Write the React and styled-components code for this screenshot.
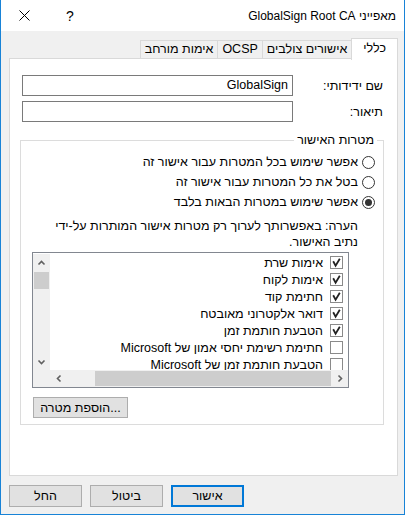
import React from "react";
import styled, { createGlobalStyle } from "styled-components";

const GlobalStyle = createGlobalStyle`
  html, body {
    margin: 0;
    padding: 0;
    background: #ffffff;
  }
  body {
    font-family: "Liberation Sans", Arial, sans-serif;
    font-size: 12.5px;
    color: #000;
  }
`;

// Dialog frame
const Window = styled.div`
  width: 405px;
  height: 515px;
  box-sizing: border-box;
  border: 1px solid #1883d7;
  border-top: none;
  display: flex;
  flex-direction: column;
  background: #f0f0f0;
  direction: rtl;
`;

const TitleBar = styled.div`
  height: 31px;
  flex-shrink: 0;
  display: flex;
  align-items: center;
  background: #ffffff;
`;

const Title = styled.div`
  flex: 1;
  padding-right: 8px;
  font-size: 12px;
  white-space: nowrap;
`;

const CaptionButton = styled.div`
  width: 46px;
  height: 31px;
  display: flex;
  align-items: center;
  justify-content: center;
  font-size: 14px;
`;

const Body = styled.div`
  flex: 1;
  display: flex;
  flex-direction: column;
  padding: 7px 6px 0 8px;
`;

// Tabs
const TabStrip = styled.div`
  height: 20px;
  display: flex;
  align-items: flex-end;
  position: relative;
  z-index: 1;
`;

const Tab = styled.div`
  box-sizing: border-box;
  height: ${({ $active }) => ($active ? "22px" : "18px")};
  margin-bottom: ${({ $active }) => ($active ? "-2px" : "0")};
  margin-left: -1px;
  padding: ${({ $active }) => ($active ? "2px 11px 0" : "1px 4px 0")};
  border: 1px solid #d9d9d9;
  border-bottom: none;
  background: ${({ $active }) => ($active ? "#ffffff" : "#f0f0f0")};
  white-space: nowrap;
  line-height: 15px;
`;

const Panel = styled.div`
  box-sizing: border-box;
  height: 418px;
  background: #ffffff;
  border: 1px solid #d9d9d9;
  padding: 16px 13px 0 10px;
  display: flex;
  flex-direction: column;
`;

const FieldRow = styled.div`
  display: flex;
  align-items: center;
  justify-content: space-between;
  padding-left: 2px;
  padding-right: 1px;
  margin-bottom: ${({ $gap }) => $gap}px;
`;

const FieldLabel = styled.label`
  white-space: nowrap;
`;

const TextBox = styled.div`
  box-sizing: border-box;
  width: 271px;
  height: 21px;
  border: 1px solid #7a7a7a;
  padding: 0 4px;
  display: flex;
  align-items: center;
  line-height: 19px;
`;

// Group box
const GroupBox = styled.fieldset`
  margin: 11px 0 0 0;
  padding: 0 0 6px 0;
  border: 1px solid #dcdcdc;
  display: flex;
  flex-direction: column;
  min-width: 0;
`;

const Legend = styled.legend`
  margin-right: 6px;
  padding: 0 3px;
  line-height: 15px;
`;

const RadioRow = styled.div`
  height: 20px;
  display: flex;
  align-items: center;
  gap: 4px;
  padding-right: 8px;
`;

const RadioCircle = styled.span`
  box-sizing: border-box;
  width: 13px;
  height: 13px;
  border-radius: 50%;
  border: 1px solid #333333;
  background: #ffffff;
  display: flex;
  align-items: center;
  justify-content: center;

  &::after {
    content: "";
    width: 7px;
    height: 7px;
    border-radius: 50%;
    background: ${({ $checked }) => ($checked ? "#333333" : "transparent")};
  }
`;

const Note = styled.div`
  margin-top: 6px;
  padding-right: 25px;
  line-height: 16px;
`;

// List box with scrollbars
const ListBox = styled.div`
  box-sizing: border-box;
  height: 136px;
  margin: 2px 34px 0 11px;
  border: 1px solid #828790;
  padding: 1px 0 0 1px;
  display: grid;
  grid-template-columns: 1fr 17px;
  grid-template-rows: 1fr 17px;
`;

const Items = styled.div`
  overflow: hidden;
  padding-right: 5px;
`;

const Item = styled.div`
  height: 17px;
  display: flex;
  align-items: center;
  gap: 7px;
  white-space: nowrap;
`;

const CheckBox = styled.span`
  box-sizing: border-box;
  width: 13px;
  height: 13px;
  flex-shrink: 0;
  border: 1px solid #8a8a8a;
  background: #ffffff;
  display: flex;
  align-items: center;
  justify-content: center;
`;

const VScroll = styled.div`
  background: #f0f0f0;
  display: flex;
  flex-direction: column;
  align-items: center;
`;

const ScrollButton = styled.div`
  width: 17px;
  height: 17px;
  flex-shrink: 0;
  display: flex;
  align-items: center;
  justify-content: center;
`;

const VThumb = styled.div`
  width: 15px;
  height: 17px;
  margin-top: 1px;
  background: #cdcdcd;
`;

const Spacer = styled.div`
  flex: 1;
`;

const HScroll = styled.div`
  background: #f0f0f0;
  display: flex;
  align-items: center;
  direction: ltr;
`;

const HThumb = styled.div`
  height: 15px;
  width: 236px;
  margin-left: 28px;
  background: #cdcdcd;
`;

const Corner = styled.div`
  background: #f0f0f0;
`;

const Button = styled.button`
  box-sizing: border-box;
  height: 22px;
  width: ${({ $w }) => $w}px;
  padding: 0;
  border: ${({ $default }) =>
    $default ? "2px solid #0078d7" : "1px solid #adadad"};
  background: #e1e1e1;
  font-family: inherit;
  font-size: 12.5px;
  color: #000;
  direction: rtl;
`;

// the add button keeps the ellipsis after the words, as in the dialog
const AddButton = styled(Button)`
  height: 21px;
  align-self: flex-end;
  margin: 9px 0 0 12px;
  direction: ltr;
`;

const ButtonBar = styled.div`
  display: flex;
  justify-content: flex-end;
  gap: 8px;
  margin-top: 9px;
`;

const Chevron = ({ dir }) => {
  const paths = {
    up: "M1.5 5.5 L4.5 2.5 L7.5 5.5",
    down: "M1.5 2.5 L4.5 5.5 L7.5 2.5",
    left: "M5.5 1.5 L2.5 4.5 L5.5 7.5",
    right: "M2.5 1.5 L5.5 4.5 L2.5 7.5",
  };
  const w = dir === "up" || dir === "down" ? 9 : 8;
  const h = dir === "up" || dir === "down" ? 8 : 9;
  return (
    <svg width={w} height={h} viewBox={`0 0 ${w} ${h}`}>
      <path d={paths[dir]} fill="none" stroke="#606060" strokeWidth="1.6" />
    </svg>
  );
};

const Check = () => (
  <svg width="11" height="11" viewBox="0 0 11 11">
    <path
      d="M2.2 4.2 L4.6 8.6 L8.8 1.8"
      fill="none"
      stroke="#222"
      strokeWidth="1.8"
      strokeLinejoin="miter"
    />
  </svg>
);

const purposes = [
  { label: "אימות שרת", checked: true },
  { label: "אימות לקוח", checked: true },
  { label: "חתימת קוד", checked: true },
  { label: "דואר אלקטרוני מאובטח", checked: true },
  { label: "הטבעת חותמת זמן", checked: true },
  { label: "חתימת רשימת יחסי אמון של Microsoft", checked: false },
  { label: "הטבעת חותמת זמן של Microsoft", checked: false },
];

const radios = [
  { label: "אפשר שימוש בכל המטרות עבור אישור זה", checked: false },
  { label: "בטל את כל המטרות עבור אישור זה", checked: false },
  { label: "אפשר שימוש במטרות הבאות בלבד", checked: true },
];

const tabs = ["כללי", "אישורים צולבים", "OCSP", "אימות מורחב"];

export default function App() {
  return (
    <>
      <GlobalStyle />
      <Window>
        <TitleBar>
          <Title>מאפייני GlobalSign Root CA</Title>
          <CaptionButton>?</CaptionButton>
          <CaptionButton>
            <svg width="11" height="11" viewBox="0 0 11 11">
              <path d="M0.5 0.5 L10.5 10.5 M10.5 0.5 L0.5 10.5" stroke="#000" strokeWidth="1" />
            </svg>
          </CaptionButton>
        </TitleBar>

        <Body>
          <TabStrip>
            {tabs.map((t, i) => (
              <Tab key={t} $active={i === 0}>
                {t}
              </Tab>
            ))}
          </TabStrip>

          <Panel>
            <FieldRow $gap={5}>
              <FieldLabel>שם ידידותי:</FieldLabel>
              <TextBox>GlobalSign</TextBox>
            </FieldRow>
            <FieldRow $gap={0}>
              <FieldLabel>תיאור:</FieldLabel>
              <TextBox />
            </FieldRow>

            <GroupBox>
              <Legend>מטרות האישור</Legend>
              <div style={{ height: 4 }} />
              {radios.map((r) => (
                <RadioRow key={r.label}>
                  <RadioCircle $checked={r.checked} />
                  <span>{r.label}</span>
                </RadioRow>
              ))}

              <Note>
                הערה: באפשרותך לערוך רק מטרות אישור המותרות על-ידי
                <br />
                נתיב האישור.
              </Note>

              <ListBox>
                <Items>
                  {purposes.map((p) => (
                    <Item key={p.label}>
                      <CheckBox>{p.checked && <Check />}</CheckBox>
                      <span>{p.label}</span>
                    </Item>
                  ))}
                </Items>
                <VScroll>
                  <ScrollButton>
                    <Chevron dir="up" />
                  </ScrollButton>
                  <VThumb />
                  <Spacer />
                  <ScrollButton>
                    <Chevron dir="down" />
                  </ScrollButton>
                </VScroll>
                <HScroll>
                  <ScrollButton>
                    <Chevron dir="left" />
                  </ScrollButton>
                  <HThumb />
                  <Spacer />
                  <ScrollButton>
                    <Chevron dir="right" />
                  </ScrollButton>
                </HScroll>
                <Corner />
              </ListBox>

              <AddButton $w={95}>הוספת מטרה...</AddButton>
            </GroupBox>
          </Panel>

          <ButtonBar>
            <Button $w={73} $default>
              אישור
            </Button>
            <Button $w={73}>ביטול</Button>
            <Button $w={73}>החל</Button>
          </ButtonBar>
        </Body>
      </Window>
    </>
  );
}
